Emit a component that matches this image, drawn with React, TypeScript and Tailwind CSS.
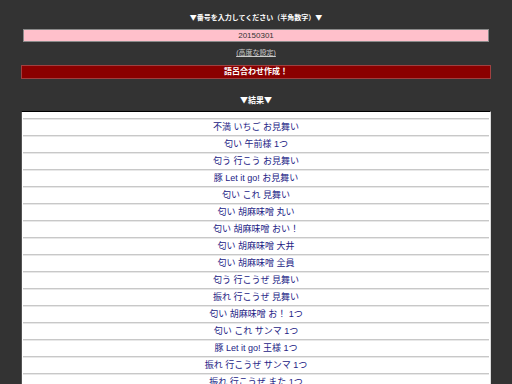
import React from "react";

const rows = [
  "不満 いちご お見舞い",
  "匂い 午前様 1つ",
  "匂う 行こう お見舞い",
  "豚 Let it go! お見舞い",
  "匂い これ 見舞い",
  "匂い 胡麻味噌 丸い",
  "匂い 胡麻味噌 おい！",
  "匂い 胡麻味噌 大井",
  "匂い 胡麻味噌 全員",
  "匂う 行こうぜ 見舞い",
  "振れ 行こうぜ 見舞い",
  "匂い 胡麻味噌 お！ 1つ",
  "匂い これ サンマ 1つ",
  "豚 Let it go! 王様 1つ",
  "振れ 行こうぜ サンマ 1つ",
  "振れ 行こうぜ また 1つ",
];

const cjk = { fontFamily: '"Noto Sans CJK JP", "Liberation Sans", sans-serif' };

export default function App() {
  return (
    <div
      className="min-h-screen bg-[#333333] overflow-hidden"
      style={{ fontFamily: '"Liberation Sans", "Noto Sans CJK JP", sans-serif' }}
    >
      <div className="flex h-[384px] flex-col pt-[11px] px-[21px]">
        <div className="text-center text-[7px] font-bold leading-[12px] text-white" style={cjk}>
          ▼番号を入力してください（半角数字）▼
        </div>
        <div className="mx-[2px] mt-[6px] flex h-[13px] items-center justify-center border border-[#8a8a8a] bg-[#ffc0cb] text-[8px] leading-[11px] text-[#333]">
          20150301
        </div>
        <div className="mt-[5px] text-center text-[7px] leading-[12px] text-[#cccccc] underline">
          (高度な設定)
        </div>
        <div className="mt-[6px] flex h-[14px] items-center justify-center border border-[#a04040] bg-[#8b0000] text-[8px] font-bold leading-[12px] text-white">
          語呂合わせ作成！
        </div>
        <div className="mt-[15px] text-center text-[8px] font-bold leading-[12px] text-white" style={cjk}>
          ▼結果▼
        </div>
        <div className="mt-[5px] flex-1 border-t border-l border-t-black border-l-[#555] border-r border-r-[#ddd] bg-white px-[1px] pt-[6px]">
          {rows.map((r, i) => (
            <div key={i}>
              <div className="h-[2px] border-t border-t-[#c8c8c8] border-b border-b-[#e8e8e8]" />
              <div className="flex h-[15px] items-center justify-center text-[9px] leading-[15px] text-[#232385]">
                {r}
              </div>
            </div>
          ))}
        </div>
      </div>
    </div>
  );
}
